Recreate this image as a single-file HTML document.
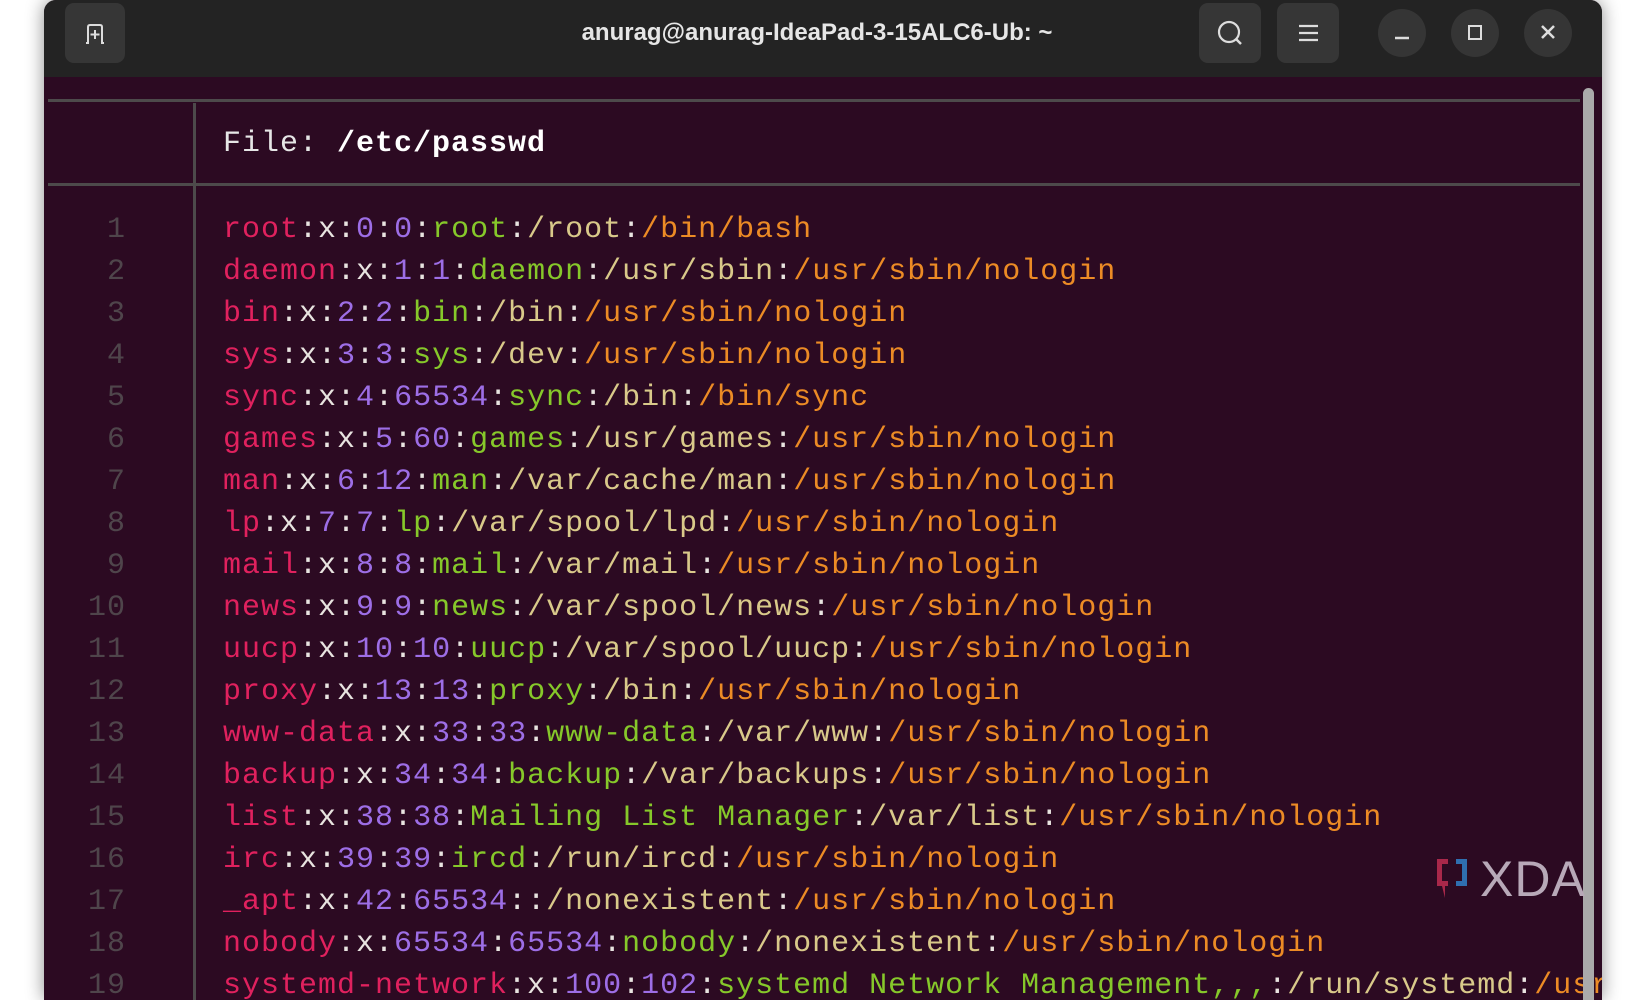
<!DOCTYPE html>
<html><head><meta charset="utf-8"><style>
html,body{margin:0;padding:0;width:1650px;height:971px;overflow:hidden;background:#fff;}
.win{position:absolute;left:44px;top:0;width:1558px;height:1000px;background:#2c0a22;border-radius:12px 12px 0 0;box-shadow:0 0 18px rgba(0,0,0,.45);overflow:hidden}
.tb{position:absolute;left:0;top:0;width:100%;height:77px;background:#232323}
.btn{position:absolute;background:#363636;border-radius:9px}
.cb{position:absolute;width:48px;height:48px;border-radius:50%;background:#353535}
.title{position:absolute;left:0;width:100%;top:19px;text-align:center;color:#e6e6e6;font:bold 24px "Liberation Sans",sans-serif;margin-left:-6px}
.hl{position:absolute;left:4px;width:1532px;height:3px;background:#4d4a4b}
.vl{position:absolute;left:149px;top:103px;width:3px;height:900px;background:#4d4a4b}
.mono{font-family:"Liberation Mono",monospace;font-size:30px;letter-spacing:1px}
.file{position:absolute;left:179px;top:127px;color:#e6e6e6}
.file b{color:#fff}
.nums{position:absolute;left:0;width:82px;top:209px;text-align:right;color:#4f454b;line-height:42px}
.code{position:absolute;left:179px;top:209px;line-height:42px;color:#e8e4e0;white-space:pre}
.u{color:#e0215e}.n{color:#9d6ee6}.g{color:#86c82a}.h{color:#d9c98a}.s{color:#ec8b25}
.sb{position:absolute;left:1539px;top:88px;width:11px;height:920px;background:#aaa;border-radius:6px}
.xda{position:absolute;left:1434px;top:856px}
.xt{position:absolute;left:46px;top:-6px;font:50px "Liberation Sans",sans-serif;color:#b8a9b8;letter-spacing:1px}
</style></head><body>
<div class="win">
 <div class="tb">
  <div class="btn" style="left:21px;top:3px;width:60px;height:60px"><svg width="60" height="60"><path d="M23 40 L23 24 Q23 22 25 22 L35 22 Q37 22 37 24 L37 40 M21 40 h3 M36 40 h3 M30 27 v9 M25.5 31.5 h9" stroke="#ddd" stroke-width="2" fill="none"/></svg></div>
  <div class="title">anurag@anurag-IdeaPad-3-15ALC6-Ub: ~</div>
  <div class="btn" style="left:1155px;top:3px;width:62px;height:60px"><svg width="62" height="60"><circle cx="30" cy="29" r="10" stroke="#ddd" stroke-width="2.2" fill="none"/><path d="M37 36 L42 41" stroke="#ddd" stroke-width="2.5"/></svg></div>
  <div class="btn" style="left:1233px;top:3px;width:62px;height:60px"><svg width="62" height="60"><path d="M22 23 h19 M22 30 h19 M22 37 h19" stroke="#ddd" stroke-width="2.2"/></svg></div>
  <div class="cb" style="left:1334px;top:9px"><svg width="48" height="48"><path d="M17 29 h14" stroke="#ddd" stroke-width="2.5"/></svg></div>
  <div class="cb" style="left:1407px;top:9px"><svg width="48" height="48"><rect x="18" y="17" width="12" height="13" stroke="#ddd" stroke-width="2" fill="none"/></svg></div>
  <div class="cb" style="left:1480px;top:9px"><svg width="48" height="48"><path d="M18 17 L30 29 M30 17 L18 29" stroke="#ddd" stroke-width="2.5"/></svg></div>
 </div>
 <div class="hl" style="top:99px"></div>
 <div class="hl" style="top:183px"></div>
 <div class="vl"></div>
 <div class="mono file">File: <b>/etc/passwd</b></div>
 <div class="mono nums">1<br>2<br>3<br>4<br>5<br>6<br>7<br>8<br>9<br>10<br>11<br>12<br>13<br>14<br>15<br>16<br>17<br>18<br>19</div>
 <div class="mono code"><span class="u">root</span>:x:<span class="n">0</span>:<span class="n">0</span>:<span class="g">root</span>:<span class="h">/root</span>:<span class="s">/bin/bash</span>
<span class="u">daemon</span>:x:<span class="n">1</span>:<span class="n">1</span>:<span class="g">daemon</span>:<span class="h">/usr/sbin</span>:<span class="s">/usr/sbin/nologin</span>
<span class="u">bin</span>:x:<span class="n">2</span>:<span class="n">2</span>:<span class="g">bin</span>:<span class="h">/bin</span>:<span class="s">/usr/sbin/nologin</span>
<span class="u">sys</span>:x:<span class="n">3</span>:<span class="n">3</span>:<span class="g">sys</span>:<span class="h">/dev</span>:<span class="s">/usr/sbin/nologin</span>
<span class="u">sync</span>:x:<span class="n">4</span>:<span class="n">65534</span>:<span class="g">sync</span>:<span class="h">/bin</span>:<span class="s">/bin/sync</span>
<span class="u">games</span>:x:<span class="n">5</span>:<span class="n">60</span>:<span class="g">games</span>:<span class="h">/usr/games</span>:<span class="s">/usr/sbin/nologin</span>
<span class="u">man</span>:x:<span class="n">6</span>:<span class="n">12</span>:<span class="g">man</span>:<span class="h">/var/cache/man</span>:<span class="s">/usr/sbin/nologin</span>
<span class="u">lp</span>:x:<span class="n">7</span>:<span class="n">7</span>:<span class="g">lp</span>:<span class="h">/var/spool/lpd</span>:<span class="s">/usr/sbin/nologin</span>
<span class="u">mail</span>:x:<span class="n">8</span>:<span class="n">8</span>:<span class="g">mail</span>:<span class="h">/var/mail</span>:<span class="s">/usr/sbin/nologin</span>
<span class="u">news</span>:x:<span class="n">9</span>:<span class="n">9</span>:<span class="g">news</span>:<span class="h">/var/spool/news</span>:<span class="s">/usr/sbin/nologin</span>
<span class="u">uucp</span>:x:<span class="n">10</span>:<span class="n">10</span>:<span class="g">uucp</span>:<span class="h">/var/spool/uucp</span>:<span class="s">/usr/sbin/nologin</span>
<span class="u">proxy</span>:x:<span class="n">13</span>:<span class="n">13</span>:<span class="g">proxy</span>:<span class="h">/bin</span>:<span class="s">/usr/sbin/nologin</span>
<span class="u">www-data</span>:x:<span class="n">33</span>:<span class="n">33</span>:<span class="g">www-data</span>:<span class="h">/var/www</span>:<span class="s">/usr/sbin/nologin</span>
<span class="u">backup</span>:x:<span class="n">34</span>:<span class="n">34</span>:<span class="g">backup</span>:<span class="h">/var/backups</span>:<span class="s">/usr/sbin/nologin</span>
<span class="u">list</span>:x:<span class="n">38</span>:<span class="n">38</span>:<span class="g">Mailing List Manager</span>:<span class="h">/var/list</span>:<span class="s">/usr/sbin/nologin</span>
<span class="u">irc</span>:x:<span class="n">39</span>:<span class="n">39</span>:<span class="g">ircd</span>:<span class="h">/run/ircd</span>:<span class="s">/usr/sbin/nologin</span>
<span class="u">_apt</span>:x:<span class="n">42</span>:<span class="n">65534</span>::<span class="h">/nonexistent</span>:<span class="s">/usr/sbin/nologin</span>
<span class="u">nobody</span>:x:<span class="n">65534</span>:<span class="n">65534</span>:<span class="g">nobody</span>:<span class="h">/nonexistent</span>:<span class="s">/usr/sbin/nologin</span>
<span class="u">systemd-network</span>:x:<span class="n">100</span>:<span class="n">102</span>:<span class="g">systemd Network Management,,,</span>:<span class="h">/run/systemd</span>:<span class="s">/usr/sbin/nologin</span></div>
 <div class="sb"></div>
</div>
<div class="xda">
 <svg width="46" height="46" style="position:absolute;left:0;top:0"><path d="M14 3 H3 V30 H8 L11 42 V30 H14 V25 H8 V8 H14 Z" fill="#a8284a"/><path d="M22 3 H33 V30 H22 V25 H28 V8 H22 Z" fill="#2f6fb0"/></svg>
 <div class="xt">XDA</div>
</div>
</body></html>
